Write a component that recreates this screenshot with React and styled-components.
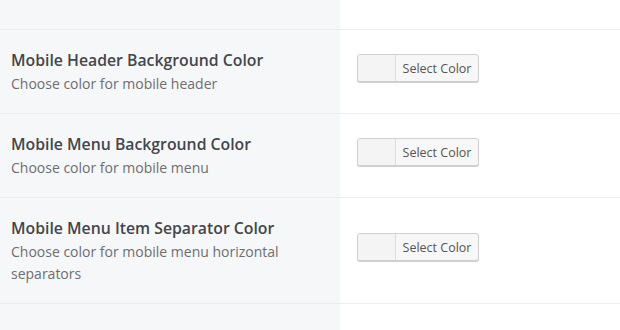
import React from "react";
import styled, { createGlobalStyle } from "styled-components";

const Global = createGlobalStyle`
  html, body { margin: 0; padding: 0; background: #fff; }
  body { font-family: "Open Sans", "Noto Sans", sans-serif; }
`;

const Page = styled.div`
  width: 620px;
  height: 330px;
  overflow: hidden;
  background: linear-gradient(to right, #f6f7f9 0, #f6f7f9 340px, #fff 340px);
`;

const Top = styled.div`
  height: 29px;
  border-bottom: 1px solid #ececec;
`;

const Row = styled.div`
  display: grid;
  grid-template-columns: 340px 1fr;
  border-bottom: 1px solid #ececec;
`;

const Label = styled.div`
  padding: 18px 12px 18px 11px;
`;

const Title = styled.div`
  font-size: 15.8px;
  font-weight: 600;
  line-height: 25px;
  color: #43464b;
`;

const Desc = styled.div`
  font-size: 14px;
  line-height: 22px;
  color: #6c6e72;
  max-width: 290px;
`;

const Control = styled.div`
  display: flex;
  align-items: center;
  padding: 0 0 7px 17px;
`;

const ColorButton = styled.button`
  display: flex;
  align-items: stretch;
  height: 28px;
  width: 122px;
  padding: 0;
  border: 1px solid #cfcfcf;
  border-radius: 3px;
  background: #f7f7f7;
  box-shadow: 0 1px 0 #cfcfcf;
  cursor: pointer;
  overflow: hidden;
  font-family: "Open Sans", "Noto Sans", sans-serif;
`;

const Swatch = styled.span`
  width: 37px;
  background: ${(p) => p.$color};
  border-right: 1px solid #dcdcdc;
`;

const ButtonText = styled.span`
  flex: 1;
  display: flex;
  align-items: center;
  justify-content: center;
  font-size: 12.5px;
  color: #555;
`;

const items = [
  { title: "Mobile Header Background Color", desc: "Choose color for mobile header" },
  { title: "Mobile Menu Background Color", desc: "Choose color for mobile menu" },
  {
    title: "Mobile Menu Item Separator Color",
    desc: "Choose color for mobile menu horizontal separators",
  },
];

export default function App() {
  return (
    <>
      <Global />
      <Page>
        <Top />
        {items.map((it) => (
          <Row key={it.title}>
            <Label>
              <Title>{it.title}</Title>
              <Desc>{it.desc}</Desc>
            </Label>
            <Control>
              <ColorButton type="button">
                <Swatch $color="#f4f4f4" />
                <ButtonText>Select Color</ButtonText>
              </ColorButton>
            </Control>
          </Row>
        ))}
      </Page>
    </>
  );
}
